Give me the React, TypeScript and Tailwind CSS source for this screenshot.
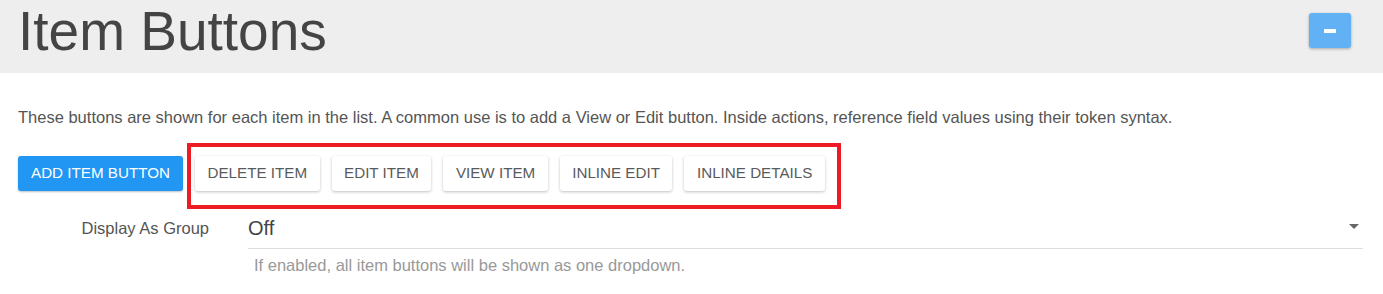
const buttons = ['Delete Item', 'Edit Item', 'View Item', 'Inline Edit', 'Inline Details'];

export default function App() {
  return (
    <div className="w-[1383px] h-[294px] bg-white overflow-hidden font-['Liberation_Sans',Arial,sans-serif]">
      {/* Header */}
      <div className="h-[73px] bg-[#eeeeee] flex items-center justify-between pl-[18px] pr-[32px]">
        <h1 className="text-[55px] leading-none text-[#444444] -mt-[10px]">Item Buttons</h1>
        <button className="w-[42px] h-[35px] -mt-[12px] rounded-[3px] bg-[#62b1f5] shadow-[0_1px_3px_rgba(0,0,0,0.3)] flex items-center justify-center">
          <span className="block w-[12px] h-[4px] bg-white" />
        </button>
      </div>

      <div className="px-[18px]">
        <p className="mt-[34px] text-[16.5px] text-[#555555] leading-[20px]">
          These buttons are shown for each item in the list. A common use is to add a View or Edit button. Inside actions, reference field values using their token syntax.
        </p>

        <div className="mt-[29px] flex items-center gap-[12px]">
          <button className="h-[35px] px-[13px] rounded-[3px] bg-[#2196f3] text-white text-[15.2px] uppercase shadow-[0_1px_2px_rgba(0,0,0,0.25)]">
            Add Item Button
          </button>
          <div className="relative flex items-center gap-[12px]">
            {buttons.map((b) => (
              <button
                key={b}
                className="h-[35px] px-[12.5px] rounded-[3px] bg-white text-[#5a5a5a] text-[15.2px] uppercase shadow-[0_1px_3px_rgba(0,0,0,0.25)]"
              >
                {b}
              </button>
            ))}
            <div className="absolute left-[-8px] right-[-16px] top-[-13px] bottom-[-18px] border-[4px] border-[#ed1c24] pointer-events-none" />
          </div>
        </div>

        <div className="mt-[17px] flex">
          <div className="w-[230px] shrink-0 pr-[39px] text-right text-[16.5px] leading-[20px] text-[#555555] pt-[10px]">Display As Group</div>
          <div className="flex-1 mr-[2px]">
            <div className="h-[41px] border-b border-[#dddddd] flex items-center justify-between">
              <span className="text-[20px] text-[#444444] -mt-[1px]">Off</span>
              <span className="w-0 h-0 border-l-[5px] border-r-[5px] border-t-[5px] border-l-transparent border-r-transparent border-t-[#666666] mr-[4px] -mt-[4px]" />
            </div>
            <p className="mt-[6px] ml-[6px] text-[16.5px] leading-[20px] text-[#999999]">If enabled, all item buttons will be shown as one dropdown.</p>
          </div>
        </div>
      </div>
    </div>
  );
}
